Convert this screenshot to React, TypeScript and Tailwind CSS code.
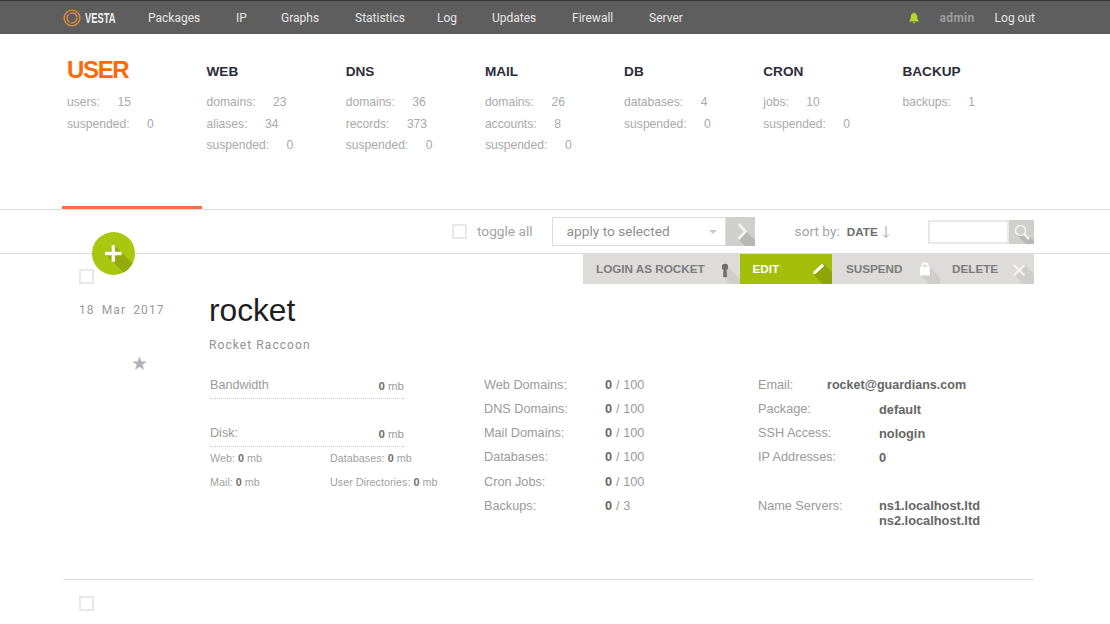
import type { ReactNode } from "react";

const navItems: [string, string][] = [
  ["Packages", "w-[88px]"],
  ["IP", "w-[45px]"],
  ["Graphs", "w-[74px]"],
  ["Statistics", "w-[82px]"],
  ["Log", "w-[55px]"],
  ["Updates", "w-[80px]"],
  ["Firewall", "w-[77px]"],
  ["Server", "w-[60px]"],
];

const tabs: { title: string; rows: [string, string][] }[] = [
  { title: "WEB", rows: [["domains:", "23"], ["aliases:", "34"], ["suspended:", "0"]] },
  { title: "DNS", rows: [["domains:", "36"], ["records:", "373"], ["suspended:", "0"]] },
  { title: "MAIL", rows: [["domains:", "26"], ["accounts:", "8"], ["suspended:", "0"]] },
  { title: "DB", rows: [["databases:", "4"], ["suspended:", "0"]] },
  { title: "CRON", rows: [["jobs:", "10"], ["suspended:", "0"]] },
  { title: "BACKUP", rows: [["backups:", "1"]] },
];

const limits: [string, string, string][] = [
  ["Web Domains:", "0", "100"],
  ["DNS Domains:", "0", "100"],
  ["Mail Domains:", "0", "100"],
  ["Databases:", "0", "100"],
  ["Cron Jobs:", "0", "100"],
  ["Backups:", "0", "3"],
];

function Checkbox() {
  return <div className="h-[15px] w-[15px] border-2 border-[#e8e8e8] bg-white" />;
}

function StatRows({ rows, className }: { rows: [string, string][]; className: string }) {
  return (
    <div className={`text-[12.1px] leading-[21.5px] text-[#a9a9a9] ${className}`}>
      {rows.map(([k, v]) => (
        <div key={k} className="flex">
          <span>{k}</span>
          <span className="ml-[17.5px]">{v}</span>
        </div>
      ))}
    </div>
  );
}

function ActionButton({
  label,
  className,
  green,
  icon,
}: {
  label: string;
  className: string;
  green?: boolean;
  icon: ReactNode;
}) {
  return (
    <div
      className={`relative flex h-[30px] items-center overflow-hidden text-[11.7px] font-bold ${className} ${
        green ? "bg-[#a3bf0a] text-white" : "bg-[#dddcda] text-[#7b7b7b]"
      }`}
    >
      {label}
      {icon}
    </div>
  );
}

function Metric({ label, value }: { label: string; value: string }) {
  return (
    <div className="flex h-[21px] w-[194px] items-start justify-between border-b border-dotted border-[#c9c9c9] text-[#9a9a9a]">
      <span className="text-[12.6px] leading-[15px]">{label}</span>
      <span className="text-[11.5px] leading-[17px]">
        <b className="text-[#6e6e6e]">{value}</b> mb
      </span>
    </div>
  );
}

function Small({ label, value, className }: { label: string; value: string; className: string }) {
  return (
    <div className={`text-[10.8px] leading-[13px] text-[#9f9f9f] ${className}`}>
      {label} <b className="text-[#6e6e6e]">{value}</b> mb
    </div>
  );
}

function InfoRow({ label, value }: { label: string; value: string }) {
  return (
    <div className="flex h-[24.3px] text-[12.7px] leading-[15px]">
      <span className="w-[121px] text-[#9a9a9a]">{label}</span>
      <b className="text-[12.8px] text-[#666]">{value}</b>
    </div>
  );
}

export default function App() {
  return (
    <div className="relative h-[624px] w-[1110px] overflow-hidden bg-white font-['Liberation_Sans',sans-serif]">
      {/* top bar */}
      <div className="flex h-[34px] items-center border-t border-[#333] bg-[#5e5e5e] pl-[63px] pr-[75px] font-['Roboto',sans-serif] text-[12px] text-[#e6e6e6]">
        <div className="mr-[25px] flex w-[60px] items-center gap-[4px]">
          <svg viewBox="0 0 18 18" className="h-[18px] w-[18px] shrink-0" fill="none" stroke="#e08a3c">
            <circle cx="9" cy="9" r="7.9" strokeWidth="1.4" />
            <circle cx="9" cy="9" r="5" strokeWidth="1.4" strokeDasharray="9 1.5" />
          </svg>
          <span className="origin-left font-['Liberation_Sans',sans-serif] text-[12px] font-bold text-[#eee] [transform:scale(0.78,1.2)]">
            VESTA
          </span>
        </div>
        {navItems.map(([name, w]) => (
          <span key={name} className={w}>
            {name}
          </span>
        ))}
        <svg viewBox="0 0 12 12" className="ml-auto h-[12px] w-[12px] fill-[#b5d52a]">
          <path d="M6 0.5c.5 0 .8.3.8.8 1.6.4 2.4 1.7 2.4 3.4 0 2 .6 3 1.5 3.9v.9H1.3v-.9c.9-.9 1.5-1.9 1.5-3.9 0-1.7.8-3 2.4-3.4 0-.5.3-.8.8-.8zM4.8 10.2h2.4c0 .7-.5 1.2-1.2 1.2s-1.2-.5-1.2-1.2z" />
        </svg>
        <b className="ml-[20px] tracking-[0.3px] text-[#9d9d9d]">admin</b>
        <span className="ml-[20px]">Log out</span>
      </div>

      {/* stats tabs */}
      <div className="flex h-[176px] border-b border-[#dcdcdc]">
        <div className="ml-[62px] h-full w-[139.5px] border-b-[3px] border-[#ff6e42] pl-[5px] pt-[22px]">
          <div className="h-[25px] text-[24px] font-bold leading-[27px] tracking-[-1.35px] text-[#fd6a05]">USER</div>
          <StatRows rows={[["users:", "15"], ["suspended:", "0"]]} className="mt-[11px]" />
        </div>
        {tabs.map((t) => (
          <div key={t.title} className="w-[139.2px] pl-[5px] pt-[30px]">
            <div className="h-[18px] text-[13.6px] font-bold leading-[16px] text-[#2c2c3a]">{t.title}</div>
            <StatRows rows={t.rows} className="mt-[10px]" />
          </div>
        ))}
      </div>

      {/* toolbar */}
      <div className="flex h-[44px] items-center border-b border-[#dcdcdc] pl-[452px] font-['Roboto',sans-serif] text-[13.7px] text-[#a3a3a3]">
        <Checkbox />
        <span className="ml-[10px]">toggle all</span>
        <div className="ml-[19px] flex h-[29px] w-[174px] items-center justify-between border border-[#dcdcdc] pl-[14px] pr-[8px] text-[#8e8e8e]">
          <span>apply to selected</span>
          <span className="h-0 w-0 border-x-[4px] border-t-[4px] border-x-transparent border-t-[#c8c8c8]" />
        </div>
        <div className="relative h-[29px] w-[29px] overflow-hidden bg-[#cfcfcd]">
          <svg viewBox="0 0 29 29" className="absolute inset-0 h-full w-full">
            <polygon points="12,22 20,14 29,23 29,29 19,29" fill="#b7b7b5" />
            <path d="M12.5 7l7 7.5-7 7.5" fill="none" stroke="#f2f2f2" strokeWidth="2.6" />
          </svg>
        </div>
        <span className="ml-[40px]">sort by:</span>
        <b className="ml-[7px] font-['Liberation_Sans',sans-serif] text-[11.7px] text-[#6e6e6e]">DATE</b>
        <svg viewBox="0 0 8 14" className="ml-[4px] h-[14px] w-[8px]" fill="none" stroke="#a3a3a3">
          <path d="M4 1v11.5M1.2 9.5 4 12.5l2.8-3" />
        </svg>
        <div className="ml-[38px] h-[24px] w-[81px] border-2 border-[#e8e8e8] bg-white" />
        <div className="relative h-[24px] w-[25px] overflow-hidden bg-[#cfcfcd]">
          <svg viewBox="0 0 25 24" className="absolute inset-0 h-full w-full" fill="none">
            <polygon points="8,15 15,14 25,20 25,24 17,24" fill="#b7b7b5" />
            <circle cx="11.5" cy="10.5" r="5" stroke="#f4f4f4" strokeWidth="1.5" />
            <path d="M15 14l5 5.2" stroke="#f4f4f4" strokeWidth="2.2" />
          </svg>
        </div>
      </div>

      {/* add button */}
      <div className="absolute left-[92px] top-[232px] h-[43px] w-[43px] overflow-hidden rounded-full bg-[#a8c70e]">
        <svg viewBox="0 0 43 43" className="absolute inset-0 h-full w-full">
          <polygon points="14,23 23,14 43,34 43,43 34,43" fill="#93ab0c" />
          <path d="M21.3 13.2v16.6M13 21.5h16.6" stroke="#fff" strokeWidth="3.4" />
        </svg>
      </div>

      {/* user row */}
      <div className="relative mx-[63px] flex h-[326px] w-[971px] border-b border-[#dcdcdc]">
        <div className="w-[146px] pl-[16px] pt-[15px]">
          <Checkbox />
          <div className="mt-[17px] font-['Roboto',sans-serif] text-[12px] tracking-[1.1px] text-[#9a9a9a] [word-spacing:3px]">
            18 Mar 2017
          </div>
          <div className="ml-[52px] mt-[34px] text-[19px] leading-[22px] text-[#b3b3b3]">★</div>
        </div>

        <div className="flex-1">
          <div className="ml-auto flex w-[451px]">
            <ActionButton
              label="LOGIN AS ROCKET"
              className="w-[157px] pl-[13px]"
              icon={
                <svg viewBox="0 0 30 30" className="absolute right-0 top-0 h-[30px] w-[30px]">
                  <polygon points="13,23 18,13 30,25 30,30 20,30" fill="#cfcecc" />
                  <circle cx="15" cy="13" r="3.2" fill="#6e6e6e" />
                  <path d="M13.6 14h2.8l.6 9h-4z" fill="#6e6e6e" />
                </svg>
              }
            />
            <ActionButton
              label="EDIT"
              className="w-[92px] pl-[12.5px]"
              green
              icon={
                <svg viewBox="0 0 30 30" className="absolute right-0 top-0 h-[30px] w-[30px]">
                  <polygon points="11,20 22,10 30,18 30,30 21,30" fill="#8da509" />
                  <path d="M11 20.5l.9-3.2 8.2-7.6 2.1 2.2-8.2 7.6z" fill="#fff" />
                </svg>
              }
            />
            <ActionButton
              label="SUSPEND"
              className="w-[108px] pl-[14px]"
              icon={
                <svg viewBox="0 0 30 30" className="absolute right-0 top-0 h-[30px] w-[30px]">
                  <polygon points="10,21 20,21 20,13 30,23 30,30 19,30" fill="#cfcecc" />
                  <rect x="10" y="13" width="10" height="8.5" rx="1" fill="#fff" />
                  <path d="M12 13v-.6a3 3 0 016 0v.6" fill="none" stroke="#fff" strokeWidth="1.6" />
                </svg>
              }
            />
            <ActionButton
              label="DELETE"
              className="w-[94px] pl-[12px]"
              icon={
                <svg viewBox="0 0 30 30" className="absolute right-0 top-0 h-[30px] w-[30px]">
                  <polygon points="10,21 20,10 30,20 30,30 19,30" fill="#cfcecc" />
                  <path d="M10 11l10.5 10.5M20.5 11 10 21.5" stroke="#f4f4f4" strokeWidth="2" />
                </svg>
              }
            />
          </div>

          <div className="pt-[8px] text-[31.7px] leading-[36px] text-[#1e1e1e]">rocket</div>
          <div className="mt-[10px] font-['Roboto',sans-serif] text-[12px] leading-[14px] tracking-[1.08px] text-[#90909a]">
            Rocket Raccoon
          </div>

          <div className="mt-[25.5px] flex pl-[1px]">
            <div className="w-[274px]">
              <Metric label="Bandwidth" value="0" />
              <div className="mt-[27.5px]">
                <Metric label="Disk:" value="0" />
              </div>
              <div className="mt-[5px] flex">
                <Small label="Web:" value="0" className="w-[120px]" />
                <Small label="Databases:" value="0" className="" />
              </div>
              <div className="mt-[11px] flex">
                <Small label="Mail:" value="0" className="w-[120px]" />
                <Small label="User Directories:" value="0" className="" />
              </div>
            </div>

            <div className="w-[274px]">
              {limits.map(([k, v, max]) => (
                <div key={k} className="flex h-[24.3px] text-[12.7px] leading-[15px] text-[#9a9a9a]">
                  <span className="w-[121px]">{k}</span>
                  <b className="text-[#666]">{v}</b>
                  <span className="ml-[4px]">/ {max}</span>
                </div>
              ))}
            </div>

            <div>
              <div className="flex h-[24.3px] text-[12.7px] leading-[15px]">
                <span className="w-[69px] text-[#9a9a9a]">Email:</span>
                <b className="text-[12.55px] text-[#666]">rocket@guardians.com</b>
              </div>
              <InfoRow label="Package:" value="default" />
              <InfoRow label="SSH Access:" value="nologin" />
              <InfoRow label="IP Addresses:" value="0" />
              <div className="mt-[24.5px] flex text-[12.7px] leading-[14.5px]">
                <span className="w-[121px] text-[#9a9a9a]">Name Servers:</span>
                <b className="text-[12.8px] text-[#666]">
                  ns1.localhost.ltd
                  <br />
                  ns2.localhost.ltd
                </b>
              </div>
            </div>
          </div>
        </div>
      </div>

      {/* next row */}
      <div className="ml-[79px] pt-[16px]">
        <Checkbox />
      </div>
    </div>
  );
}
